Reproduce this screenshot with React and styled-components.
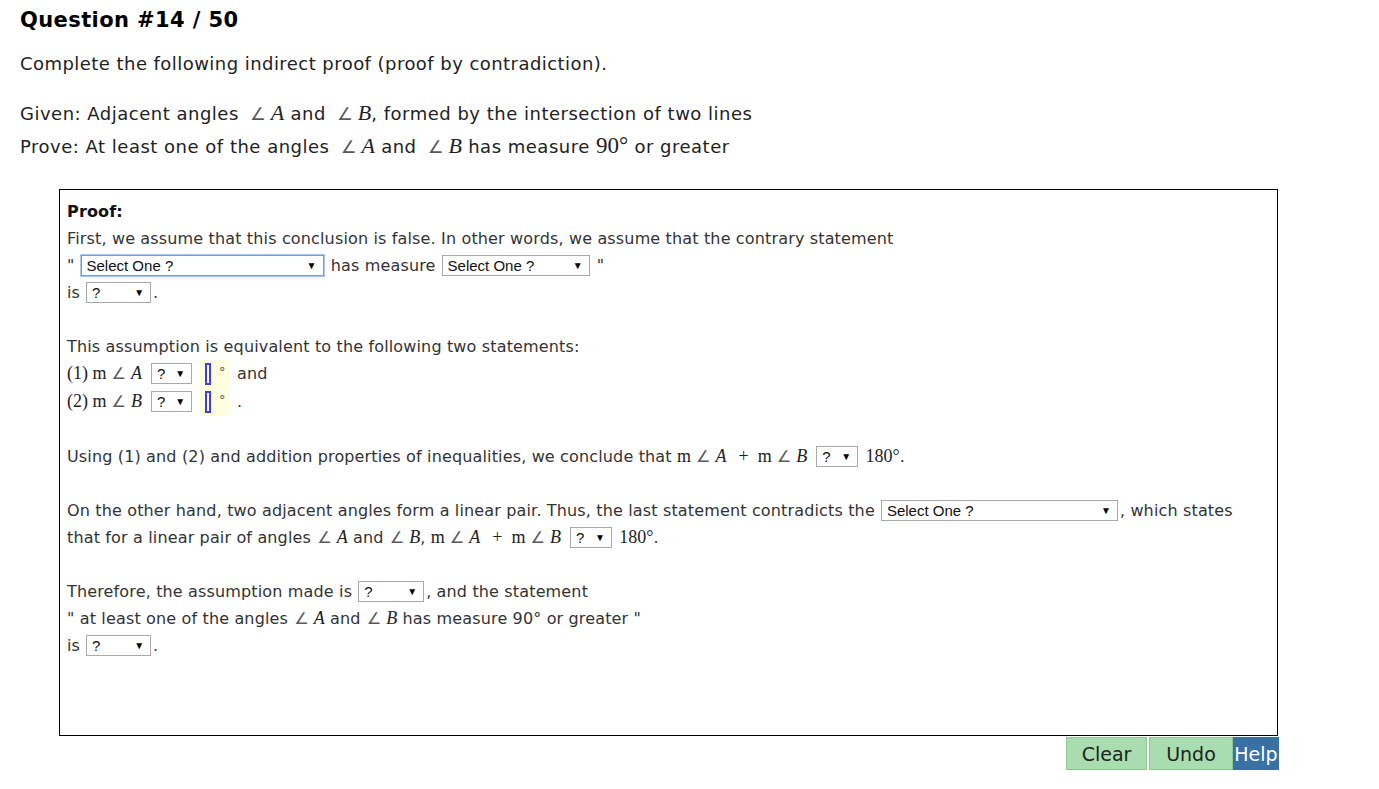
import styled, { createGlobalStyle } from "styled-components";

const GlobalStyle = createGlobalStyle`
  html, body { margin: 0; padding: 0; background: #fff; }
  body { font-family: "DejaVu Sans", Verdana, sans-serif; color: #222; }
`;

const Page = styled.div`
  padding: 5px 0 0 20px;
  width: 1259px;
`;

const Title = styled.h2`
  margin: 0;
  font-size: 21px;
  letter-spacing: 0.4px;
  font-weight: bold;
  color: #000;
  line-height: 30px;
`;

const Intro = styled.p`
  margin: 12px 0 0;
  font-size: 18px;
  letter-spacing: 0.45px;
  line-height: 33px;
`;

const Statement = styled.div`
  margin-top: 17px;
  font-size: 18px;
  letter-spacing: 0.5px;
  line-height: 33px;
  height: 66px;
`;

const ProofBox = styled.div`
  margin: 26px 0 0 39px;
  width: 1210px;
  height: 537px;
  border: 1px solid #000;
  padding: 8px 0 0 7px;
  box-sizing: content-box;
  font-size: 16px;
  letter-spacing: 0.15px;
  color: #333;
  line-height: 27px;
`;

const ProofTitle = styled.div`
  font-weight: bold;
  color: #111;
`;

const Para = styled.div`
  margin-bottom: 27px;
`;

const Line = styled.div`
  height: ${(p) => p.$h || 27}px;
  line-height: ${(p) => p.$h || 27}px;
  white-space: nowrap;
`;

const M = styled.span`
  font-family: "Liberation Serif", "Times New Roman", serif;
  font-size: ${(p) => p.$size || 18}px;
  letter-spacing: 0;
  line-height: 1;
  color: #222;
  margin-right: ${(p) => p.$gap || 0}px;
`;

const I = styled.i`
  font-family: "Liberation Serif", "Times New Roman", serif;
`;

const Ang = styled.span`
  font-family: "DejaVu Sans", sans-serif;
  font-size: ${(p) => p.$scale || 0.9}em;
  margin: 0 5px 0 ${(p) => (p.$lead ? 1 : 5)}px;
  color: #5a5a5a;
`;

const Op = styled.span`
  margin: 0 9px;
`;

const Dropdown = styled.span`
  display: inline-flex;
  align-items: center;
  justify-content: space-between;
  box-sizing: border-box;
  width: ${(p) => p.$w}px;
  height: 21px;
  padding: 0 6px 0 5px;
  margin: 0 2px 0 6px;
  vertical-align: middle;
  position: relative;
  top: -1px;
  border: 1px solid ${(p) => (p.$focus ? "#6f9ee6" : "#a9a9a9")};
  box-shadow: ${(p) => (p.$focus ? "0 0 0 1px #a8c6f0" : "none")};
  font-family: "Liberation Sans", Arial, sans-serif;
  font-size: 15px;
  letter-spacing: 0;
  color: #111;
  background: #fff;
  line-height: 19px;
`;

const Arrow = styled.span`
  font-size: 10px;
  color: #000;
`;

const Blank = styled.span`
  display: inline-block;
  width: 30px;
  height: 28px;
  background: #ffffe0;
  vertical-align: top;
  margin-left: 6px;
  margin-right: 7px;
  position: relative;
`;

const BlankInput = styled.span`
  position: absolute;
  left: 5px;
  top: 3px;
  width: 6px;
  height: 22px;
  box-sizing: border-box;
  border: 2px solid #3f3ff0;
  background: #fff;
`;

const Deg = styled.span`
  position: absolute;
  left: 19px;
  top: -2px;
  font-size: 13px;
  color: #555;
`;

const ButtonRow = styled.div`
  display: flex;
  justify-content: flex-end;
  width: 1259px;
  margin-top: 1px;
`;

const Btn = styled.button`
  height: 33px;
  width: ${(p) => p.$w}px;
  margin-left: ${(p) => p.$gap || 0}px;
  border: 1px solid ${(p) => (p.$blue ? "#3a71a5" : "#8fc795")};
  background: ${(p) => (p.$blue ? "#3a71a5" : "#a9ddb0")};
  color: ${(p) => (p.$blue ? "#fff" : "#222")};
  font-family: "DejaVu Sans", Verdana, sans-serif;
  font-size: 19px;
  padding: 0;
  cursor: pointer;
`;

const Sel = ({ w, label = "?", focus }) => (
  <Dropdown $w={w} $focus={focus}>
    <span>{label}</span>
    <Arrow>▼</Arrow>
  </Dropdown>
);

const MA = ({ v }) => (
  <M $gap={3}>
    m<Ang>∠</Ang>
    <I>{v}</I>
  </M>
);

const Angle = ({ v, size, scale, lead = true }) => (
  <M $size={size}>
    <Ang $scale={scale} $lead={lead}>
      ∠
    </Ang>
    <I>{v}</I>
  </M>
);

const Big = ({ v }) => <Angle v={v} size={22} scale={0.8} lead={false} />;

const Sum = () => (
  <>
    <MA v="A" />
    <M>
      <Op>+</Op>
    </M>
    <MA v="B" />
  </>
);

export default function App() {
  return (
    <>
      <GlobalStyle />
      <Page>
        <Title>Question #14 / 50</Title>
        <Intro>Complete the following indirect proof (proof by contradiction).</Intro>
        <Statement>
          <div>
            Given: Adjacent angles <Big v="A" /> and <Big v="B" />, formed by the intersection of two lines
          </div>
          <div>
            Prove: At least one of the angles <Big v="A" /> and <Big v="B" /> has measure <M $size={23}>90°</M> or
            greater
          </div>
        </Statement>

        <ProofBox>
          <ProofTitle>Proof:</ProofTitle>
          <Para>
            <Line>
              First, we assume that this conclusion is false. In other words, we assume that the contrary statement
            </Line>
            <Line>
              "<Sel w={243} label="Select One ?" focus /> has measure<Sel w={148} label="Select One ?" /> "
            </Line>
            <Line>
              is<Sel w={65} />.
            </Line>
          </Para>
          <Para>
            <Line>This assumption is equivalent to the following two statements:</Line>
            <Line $h={28}>
              <M>(1) </M>
              <MA v="A" />
              <Sel w={41} />
              <Blank>
                <BlankInput />
                <Deg>°</Deg>
              </Blank>
              and
            </Line>
            <Line $h={28}>
              <M>(2) </M>
              <MA v="B" />
              <Sel w={41} />
              <Blank>
                <BlankInput />
                <Deg>°</Deg>
              </Blank>
              .
            </Line>
          </Para>
          <Para>
            <Line>
              Using (1) and (2) and addition properties of inequalities, we conclude that <Sum />
              <Sel w={42} /> <M>180°</M>.
            </Line>
          </Para>
          <Para>
            <Line>
              On the other hand, two adjacent angles form a linear pair. Thus, the last statement contradicts the
              <Sel w={237} label="Select One ?" />, which states
            </Line>
            <Line>
              that for a linear pair of angles <Angle v="A" /> and <Angle v="B" />, <Sum />
              <Sel w={42} /> <M>180°</M>.
            </Line>
          </Para>
          <div>
            <Line>
              Therefore, the assumption made is<Sel w={66} />, and the statement
            </Line>
            <Line>
              " at least one of the angles <Angle v="A" /> and <Angle v="B" /> has measure 90° or greater "
            </Line>
            <Line>
              is<Sel w={65} />.
            </Line>
          </div>
        </ProofBox>
        <ButtonRow>
          <Btn $w={81}>Clear</Btn>
          <Btn $w={84} $gap={2}>
            Undo
          </Btn>
          <Btn $w={46} $blue>
            Help
          </Btn>
        </ButtonRow>
      </Page>
    </>
  );
}
